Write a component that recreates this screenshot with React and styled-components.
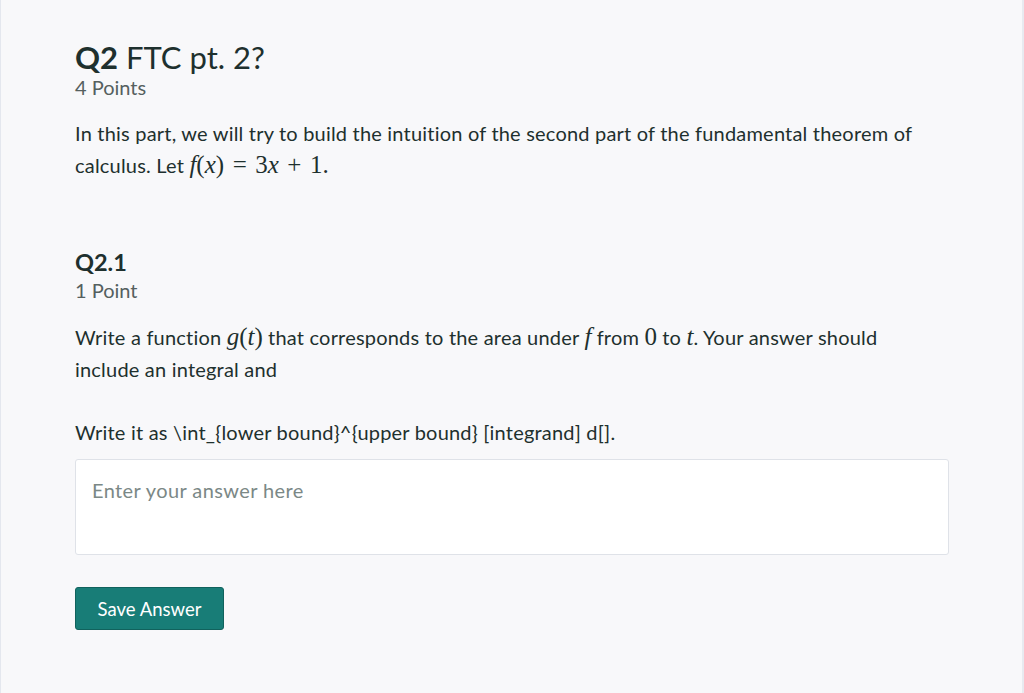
import styled, { createGlobalStyle } from 'styled-components';

const GlobalStyle = createGlobalStyle`
  html, body {
    margin: 0;
    padding: 0;
    background: #f8f8fa;
  }
  body {
    font-family: Lato, "Open Sans", sans-serif;
    color: #1e302e;
  }
`;

const Page = styled.main`
  box-sizing: border-box;
  min-height: 693px;
  padding: 40px 74px;
  border-left: 1px solid #e4e7ee;
  border-right: 2px solid #e8eaf0;
  background: #f8f8fa;
`;

const Question = styled.section`
  display: flex;
  flex-direction: column;
`;

const Title = styled.h1`
  margin: 0;
  font-size: 31px;
  line-height: 34px;
  font-weight: 400;
  color: #1e302e;
`;

const SubTitle = styled.h2`
  margin: 0;
  font-size: 23.5px;
  line-height: 30px;
  font-weight: 700;
  color: #1e302e;
`;

const Number = styled.span`
  font-weight: 700;
`;

const Points = styled.div`
  font-size: 20px;
  line-height: 26px;
  color: #55605f;
  margin-bottom: ${({ $gap }) => $gap || 20}px;
`;

const Text = styled.p`
  margin: 0 0 ${({ $gap }) => $gap || 0}px 0;
  font-size: 20px;
  letter-spacing: 0.2px;
  line-height: 32px;
  max-width: 850px;
`;

const M = styled.span`
  font-family: "Liberation Serif", "DejaVu Serif", serif;
  font-size: 1.25em;
  line-height: 1;
  letter-spacing: 0;
  font-style: ${({ $i }) => ($i ? 'italic' : 'normal')};
`;

const Op = styled(M)`
  margin: 0 0.34em;
`;

const Answer = styled.textarea`
  box-sizing: border-box;
  display: block;
  width: 874px;
  height: 96px;
  margin: 0;
  padding: 17px 16px;
  border: 1px solid #dfe2e8;
  border-radius: 3px;
  background: #fff;
  font-family: Lato, "Open Sans", sans-serif;
  font-size: 20px;
  letter-spacing: 0.4px;
  line-height: 26px;
  color: #1e302e;
  resize: none;
  outline: none;

  &::placeholder {
    color: #7b8886;
  }
`;

const SaveButton = styled.button`
  align-self: flex-start;
  margin-top: 32px;
  width: 149px;
  height: 43px;
  padding: 0;
  border: 1px solid #11625d;
  border-radius: 3px;
  background: #187d77;
  color: #fff;
  font-family: Lato, "Open Sans", sans-serif;
  font-size: 18.5px;
  cursor: pointer;
`;

export default function App() {
  return (
    <>
      <GlobalStyle />
      <Page>
        <Question>
          <Title>
            <Number>Q2</Number> FTC pt. 2?
          </Title>
          <Points $gap={17}>4 Points</Points>
          <Text $gap={66}>
            In this part, we will try to build the intuition of the second part of the
            fundamental theorem of calculus. Let <M $i>f</M>
            <M>(</M>
            <M $i>x</M>
            <M>)</M>
            <Op>=</Op>
            <M>3</M>
            <M $i>x</M>
            <Op>+</Op>
            <M>1.</M>
          </Text>
          <SubTitle>Q2.1</SubTitle>
          <Points $gap={18}>1 Point</Points>
          <Text $gap={31}>
            Write a function <M $i>g</M>
            <M>(</M>
            <M $i>t</M>
            <M>)</M> that corresponds to the area under <M $i>f</M> from <M>0</M> to{' '}
            <M $i>t</M>. Your answer should include an integral and
          </Text>
          <Text $gap={11}>Write it as \int_&#123;lower bound&#125;^&#123;upper bound&#125; [integrand] d[].</Text>
          <Answer placeholder="Enter your answer here" />
          <SaveButton>Save Answer</SaveButton>
        </Question>
      </Page>
    </>
  );
}
